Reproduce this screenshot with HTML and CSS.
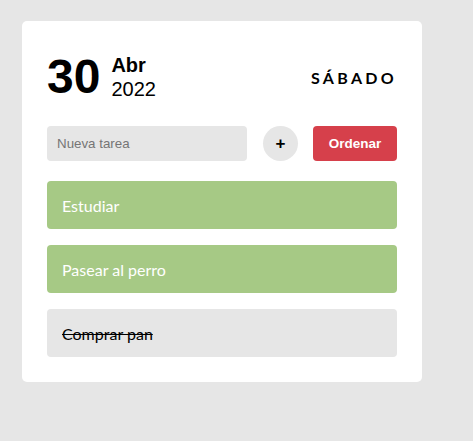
FILE: index.html
```html
<!DOCTYPE html>
<html lang="es">
<head>
<meta charset="utf-8">
<link rel="stylesheet" href="styles.css">
</head>
<body>
<div class="card">
  <div class="header">
    <div class="date">
      <span class="day">30</span>
      <div class="monthyear">
        <span class="month">Abr</span>
        <span class="year">2022</span>
      </div>
    </div>
    <div class="weekday">SÁBADO</div>
  </div>
  <form class="add-row" onsubmit="return false">
    <input class="new-task" type="text" placeholder="Nueva tarea">
    <button class="add-btn" type="button">+</button>
    <button class="sort-btn" type="button">Ordenar</button>
  </form>
  <div class="tasks">
    <div class="task pending">Estudiar</div>
    <div class="task pending">Pasear al perro</div>
    <div class="task done">Comprar pan</div>
  </div>
</div>
</body>
</html>
```
FILE: styles.css
```css
html, body {
  margin: 0;
  padding: 0;
}
body {
  background: #e6e6e6;
  width: 473px;
  height: 441px;
  font-family: "Liberation Sans", Arial, sans-serif;
}
.card {
  margin: 21px 0 0 22px;
  width: 400px;
  box-sizing: border-box;
  background: #fff;
  border-radius: 5px;
  padding: 25px;
}
.header {
  display: flex;
  align-items: center;
  justify-content: space-between;
  padding-top: 7px;
}
.date {
  display: flex;
  align-items: center;
}
.day {
  font-size: 48px;
  font-weight: bold;
  line-height: 48px;
  color: #000;
}
.monthyear {
  display: flex;
  flex-direction: column;
  margin-left: 11px;
  line-height: 20px;
  color: #000;
}
.month {
  font-size: 20px;
  font-weight: bold;
}
.year {
  font-size: 20px;
  margin-top: 4px;
}
.weekday {
  font-family: Lato, sans-serif;
  font-weight: bold;
  font-size: 16px;
  line-height: 19px;
  letter-spacing: 3.3px;
  color: #000;
}
.add-row {
  display: flex;
  align-items: center;
  margin: 25px 0 0 0;
  height: 35px;
}
.new-task {
  width: 200px;
  height: 35px;
  box-sizing: border-box;
  border: none;
  background: #e6e6e6;
  border-radius: 4px;
  padding: 0 10px;
  font-family: "Liberation Sans", Arial, sans-serif;
  font-size: 13.33px;
  outline: none;
}
.new-task::placeholder {
  color: #757575;
}
.add-btn {
  margin-left: 16px;
  width: 35px;
  height: 35px;
  border-radius: 50%;
  border: none;
  background: #e6e6e6;
  font-family: "Liberation Sans", Arial, sans-serif;
  font-weight: bold;
  font-size: 17px;
  color: #000;
  padding: 0;
}
.sort-btn {
  margin-left: 15px;
  width: 84px;
  height: 35px;
  border: none;
  border-radius: 4px;
  background: #d6404b;
  color: #fff;
  font-family: "Liberation Sans", Arial, sans-serif;
  font-weight: bold;
  font-size: 13.5px;
  padding: 0;
}
.tasks {
  display: flex;
  flex-direction: column;
  gap: 16px;
  margin-top: 20px;
}
.task {
  height: 48px;
  display: flex;
  align-items: center;
  padding: 0 15px;
  border-radius: 4px;
  font-family: Lato, sans-serif;
  font-size: 16px;
}
.pending {
  background: #a6c985;
  color: #fff;
}
.done {
  background: #e6e6e6;
  color: #000;
  text-decoration: line-through;
}
```
